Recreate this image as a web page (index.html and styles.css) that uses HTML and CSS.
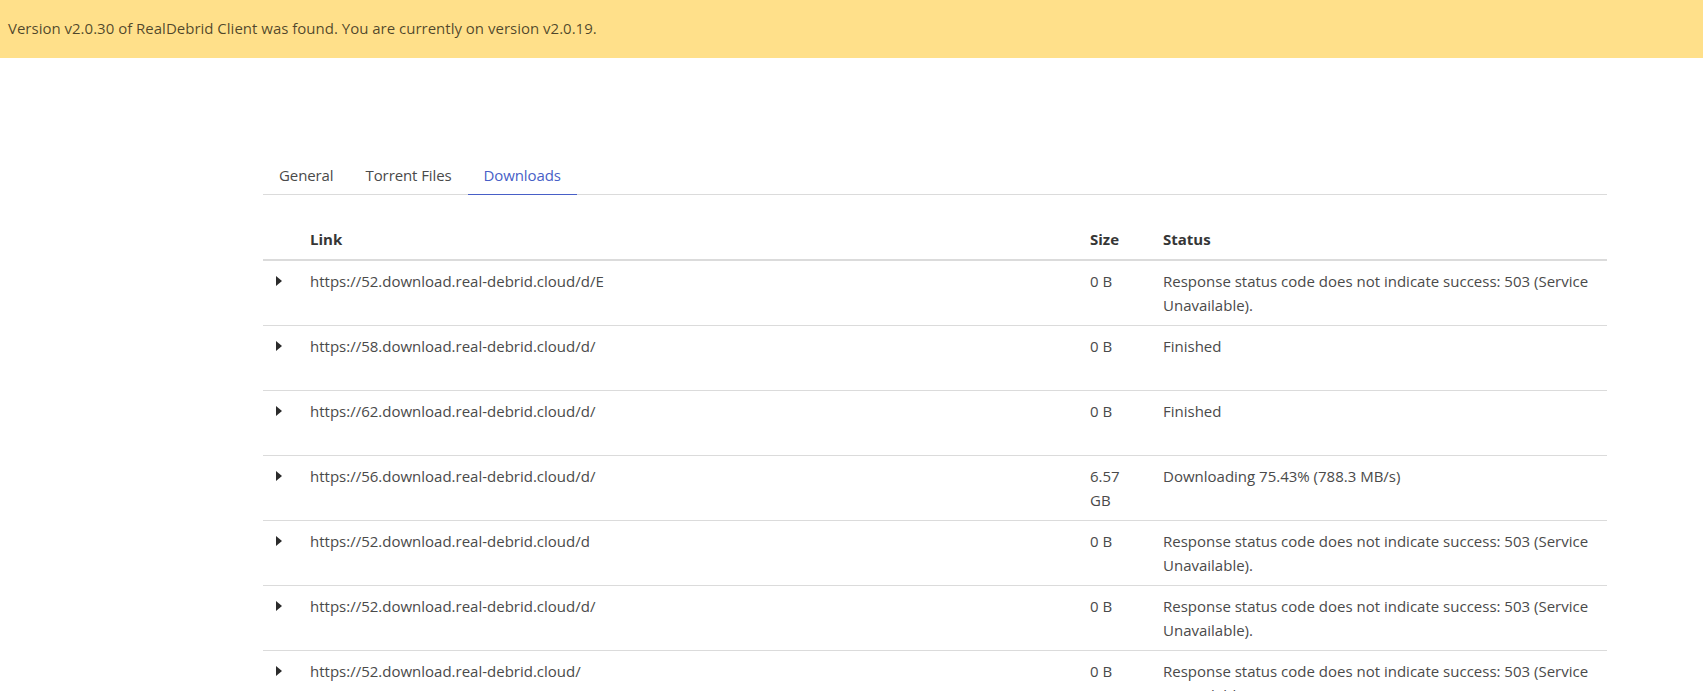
FILE: index.html
```html
<!DOCTYPE html>
<html lang="en">
<head>
<meta charset="utf-8">
<title>RealDebrid Client</title>
<link rel="stylesheet" href="styles.css">
</head>
<body>
<div class="notice">Version v2.0.30 of RealDebrid Client was found. You are currently on version v2.0.19.</div>
<main class="page">
  <nav class="tabs">
    <ul>
      <li><a>General</a></li>
      <li><a>Torrent Files</a></li>
      <li class="is-active"><a>Downloads</a></li>
    </ul>
  </nav>
  <table class="table">
    <colgroup>
      <col class="c-arrow">
      <col class="c-link">
      <col class="c-size">
      <col class="c-status">
    </colgroup>
    <thead>
      <tr><th></th><th>Link</th><th>Size</th><th>Status</th></tr>
    </thead>
    <tbody>
      <tr>
        <td class="arrow"><svg width="6" height="10" viewBox="0 0 6 10"><path d="M0 0L6 5L0 10Z"/></svg></td>
        <td><div class="link">https://52.download.real-debrid.cloud/d/E</div></td>
        <td>0 B</td>
        <td>Response status code does not indicate success: 503 (Service Unavailable).</td>
      </tr>
      <tr>
        <td class="arrow"><svg width="6" height="10" viewBox="0 0 6 10"><path d="M0 0L6 5L0 10Z"/></svg></td>
        <td><div class="link">https://58.download.real-debrid.cloud/d/</div></td>
        <td>0 B</td>
        <td>Finished</td>
      </tr>
      <tr>
        <td class="arrow"><svg width="6" height="10" viewBox="0 0 6 10"><path d="M0 0L6 5L0 10Z"/></svg></td>
        <td><div class="link">https://62.download.real-debrid.cloud/d/</div></td>
        <td>0 B</td>
        <td>Finished</td>
      </tr>
      <tr>
        <td class="arrow"><svg width="6" height="10" viewBox="0 0 6 10"><path d="M0 0L6 5L0 10Z"/></svg></td>
        <td><div class="link">https://56.download.real-debrid.cloud/d/</div></td>
        <td>6.57 GB</td>
        <td>Downloading 75.43% (788.3 MB/s)</td>
      </tr>
      <tr>
        <td class="arrow"><svg width="6" height="10" viewBox="0 0 6 10"><path d="M0 0L6 5L0 10Z"/></svg></td>
        <td><div class="link">https://52.download.real-debrid.cloud/d</div></td>
        <td>0 B</td>
        <td>Response status code does not indicate success: 503 (Service Unavailable).</td>
      </tr>
      <tr>
        <td class="arrow"><svg width="6" height="10" viewBox="0 0 6 10"><path d="M0 0L6 5L0 10Z"/></svg></td>
        <td><div class="link">https://52.download.real-debrid.cloud/d/</div></td>
        <td>0 B</td>
        <td>Response status code does not indicate success: 503 (Service Unavailable).</td>
      </tr>
      <tr>
        <td class="arrow"><svg width="6" height="10" viewBox="0 0 6 10"><path d="M0 0L6 5L0 10Z"/></svg></td>
        <td><div class="link">https://52.download.real-debrid.cloud/</div></td>
        <td>0 B</td>
        <td>Response status code does not indicate success: 503 (Service Unavailable).</td>
      </tr>
    </tbody>
  </table>
</main>
</body>
</html>
```

FILE: styles.css
```css
html, body {
  margin: 0;
  padding: 0;
  background: #fff;
}
body {
  font-family: "Open Sans", "Noto Sans", sans-serif;
  font-size: 15px;
  line-height: 24px;
  color: #4a4a4a;
}
.notice {
  background: #ffe08a;
  color: rgba(0, 0, 0, 0.7);
  padding: 16px 8px 18px 8px;
  line-height: 24px;
}
.page {
  margin: 97px 96px 0 263px;
}
.tabs ul {
  display: flex;
  list-style: none;
  margin: 0 0 24px 0;
  padding: 0;
  border-bottom: 1px solid #dbdbdb;
}
.tabs li {
  display: block;
}
.tabs a {
  display: block;
  padding: 8px 16px 7px 16px;
  margin-bottom: -1px;
  border-bottom: 1px solid #dbdbdb;
  color: #4a4a4a;
  letter-spacing: -0.1px;
  cursor: pointer;
}
.tabs li.is-active a {
  color: #485fc7;
  border-bottom-color: #485fc7;
}
.table {
  width: 100%;
  border-collapse: collapse;
  table-layout: fixed;
}
.c-arrow { width: 35px; }
.c-size { width: 73px; }
.c-status { width: 456px; }
.table th {
  text-align: left;
  font-weight: 700;
  color: #363636;
  padding: 8px 12px;
  border-bottom: 2px solid #dbdbdb;
}
.table td {
  vertical-align: top;
  padding: 8px 12px;
  border-bottom: 1px solid #dbdbdb;
}
.table td.arrow {
  padding-left: 13px;
  padding-right: 0;
}
.arrow svg {
  display: block;
  margin-top: 7px;
  fill: #2b2b2b;
}
.link {
  min-height: 48px;
  white-space: nowrap;
  overflow: hidden;
}
```
